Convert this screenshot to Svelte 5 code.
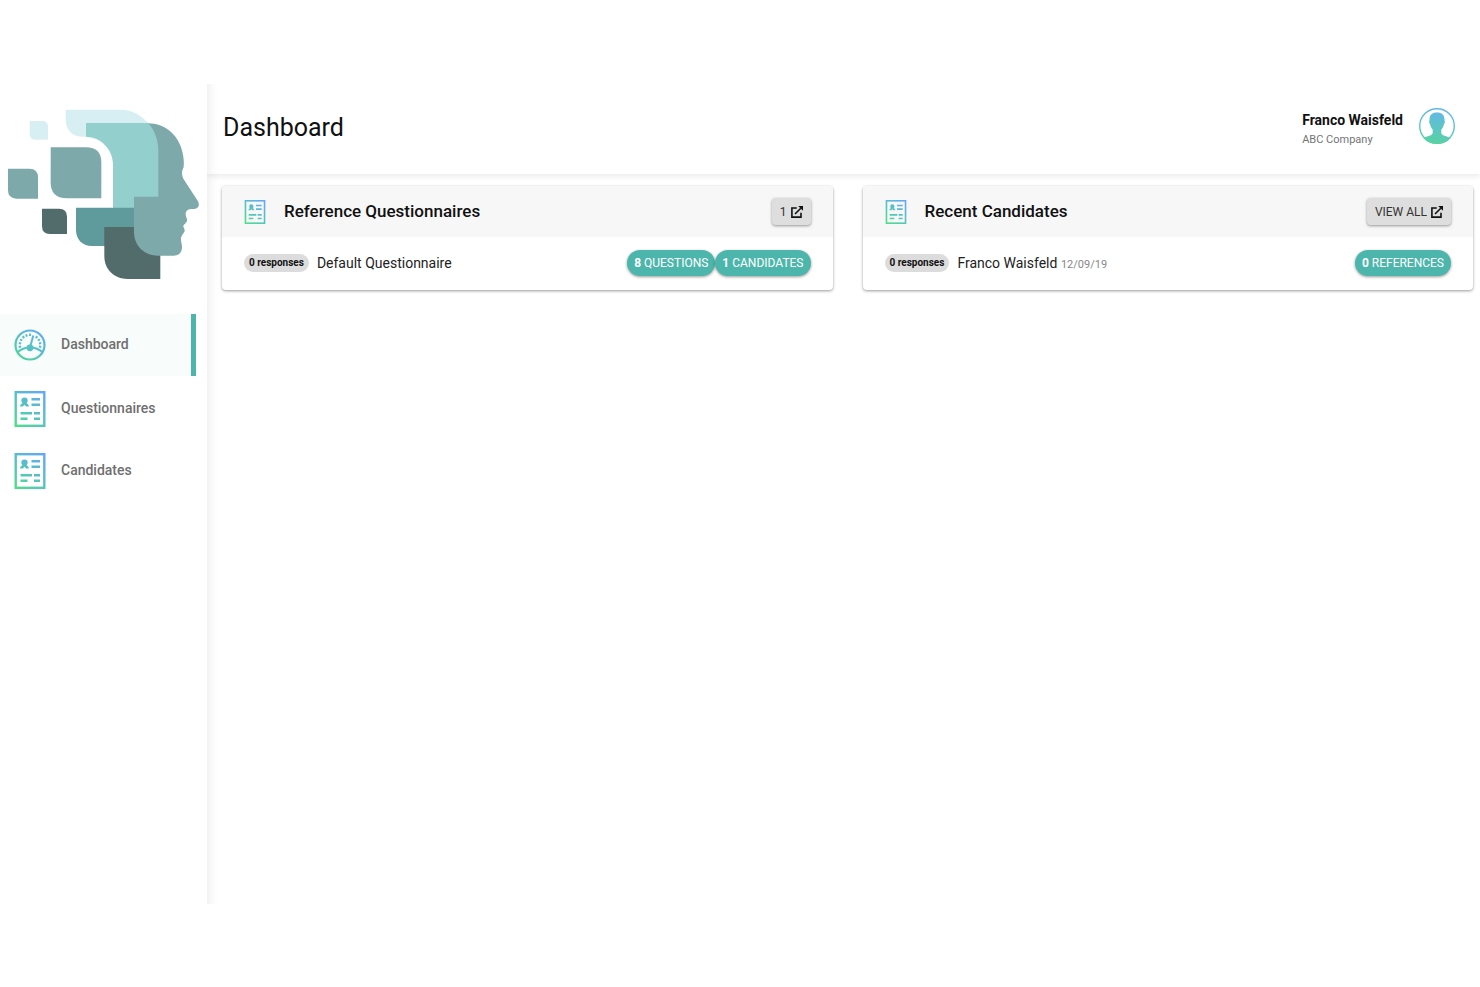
<script>
  const nav = [
    { label: 'Dashboard', icon: 'gauge', active: true },
    { label: 'Questionnaires', icon: 'form', active: false },
    { label: 'Candidates', icon: 'form', active: false }
  ];

  const cards = [
    {
      title: 'Reference Questionnaires',
      action: '1',
      name: 'Default Questionnaire',
      date: '',
      pills: [
        { count: 8, label: 'QUESTIONS' },
        { count: 1, label: 'CANDIDATES' }
      ]
    },
    {
      title: 'Recent Candidates',
      action: 'VIEW ALL',
      name: 'Franco Waisfeld',
      date: '12/09/19',
      pills: [{ count: 0, label: 'REFERENCES' }]
    }
  ];

  // Tick marks round the gauge dial, in degrees from the upward direction
  const ticks = [-100, -80, -60, -40, -20, 0, 40, 60, 80, 100];
</script>

{#snippet formIcon()}
  <svg class="form-icon" viewBox="0 0 31 36" aria-hidden="true">
    <rect x="1.2" y="1.2" width="28.6" height="33.6" fill="none" stroke="url(#brand)" stroke-width="2.4" />
    <g fill="url(#brand)">
      <path d="M10 6.500a3.200 3.200 0 0 1 3.200 3.200c0 1-.5 1.800-1.100 2.400.3 1 2.300 1 2.300 3.400h-2.800L10 13.800 8.400 15.500H5.600c0-2.400 2-2.400 2.300-3.400-.6-.6-1.100-1.400-1.100-2.400A3.200 3.200 0 0 1 10 6.500z" />
      <path d="M17 7h8.500v2.500H17zM17 12.500h8.500V15H17zM6 21h11.500v2.500H6zM19.500 21h6v2.500h-6zM6 26.500h7V29H6zM19.500 26.500h6V29h-6z" />
    </g>
  </svg>
{/snippet}

<svg class="defs" width="0" height="0" aria-hidden="true">
  <defs>
    <linearGradient id="brand" gradientUnits="userSpaceOnUse" x1="2" y1="34" x2="29" y2="2">
      <stop offset="0" stop-color="#4fdc8c" />
      <stop offset="0.5" stop-color="#56c1c4" />
      <stop offset="1" stop-color="#62a8fa" />
    </linearGradient>
    <linearGradient id="avatar" gradientUnits="userSpaceOnUse" x1="14" y1="36" x2="22" y2="0">
      <stop offset="0" stop-color="#58d3a0" />
      <stop offset="1" stop-color="#62b5ee" />
    </linearGradient>
  </defs>
</svg>

<div class="app">
  <aside>
    <svg class="logo" viewBox="24 87 573 510" role="img" aria-label="Company logo">
      <path fill="#d7eff3" d="M89 123h38q17 0 17 17v39h-38q-17 0-17-17z" />
      <path fill="#7da9ab" d="M24 266h64q26 0 26 26v64H50q-26 0-26-26z" />
      <path fill="#526b6b" d="M126 386h51q24 0 24 24v52h-51q-24 0-24-24z" />
      <path fill="#7da9ab" d="M152 202h106q46 0 46 46v107H200q-48 0-48-48z" />
      <path fill="#d7eff3" d="M197 89h163c37 0 63 16 87 42l-100 60-89-21h-14c-28 0-47-22-47-50z" />
      <path fill="#7da9ab" d="M443 130c55 0 97 39 106 94 4 25 2 29 2 38-7 13-6 23-1 34l43 66c7 12 4 24-11 25-13-1-25 2-25 15 0 9 5 12 4 20-1 7-9 10-11 15-1 5 4 8 4 15 0 6-10 12-11 23-1 11 4 18 3 29-1 13-9 23-26 23l-63-60V240z" />
      <path fill="#93cfcd" d="M258 129h186c20 22 31 50 31 83v172H339V254c0-45-36-84-81-84z" />
      <path fill="#5f9b9c" d="M228 383h176v115H275c-29 0-47-21-47-48z" />
      <path fill="#526b6b" d="M313 441h90l78 80v76H382c-39 0-69-28-69-68z" />
      <path fill="#7da9ab" d="M402 350h73l65 20-20 157h-46c-40 0-72-28-72-70z" />
    </svg>

    <nav>
      {#each nav as item}
        <a href="#{item.label.toLowerCase()}" class:active={item.active}>
          {#if item.icon === 'gauge'}
            <svg class="gauge" viewBox="0 0 32 32" aria-hidden="true">
              <g fill="none" stroke="url(#brand)">
                <circle cx="16" cy="16" r="14.500" stroke-width="2.200" />
                <path d="M3 23.500C7 20 11.500 18.500 16 18.500s9 1.500 13 5" stroke-width="2.200" />
                <path d="M16 18.500L19.300 6.500" stroke-width="2" />
              </g>
              {#each ticks as angle}
                <rect x="15" y="4.600" width="2" height="2.400" fill="#5bbcc9" transform="rotate({angle} 16 16)" />
              {/each}
              <circle cx="16" cy="18.800" r="3.400" fill="#56c1c4" />
            </svg>
          {:else}
            {@render formIcon()}
          {/if}
          <span>{item.label}</span>
        </a>
      {/each}
    </nav>
  </aside>

  <div class="content">
    <header>
      <h1>Dashboard</h1>
      <div class="user">
        <div>
          <strong>Franco Waisfeld</strong>
          <small>ABC Company</small>
        </div>
        <svg class="avatar" viewBox="0 0 36 36" aria-hidden="true">
          <circle cx="18" cy="18" r="17.300" fill="#fff" stroke="url(#avatar)" stroke-width="1.400" />
          <path fill="url(#avatar)" d="M18 4.500c5 0 7.800 2.600 7.500 8 .7.600.5 2.800-.6 3.800-.4 2.200-1.300 4-2.600 5.400v3c0 3 5.500 3.200 9.500 5.400A18 18 0 0 1 18 36 18 18 0 0 1 4.200 30.100c4-2.200 9.500-2.400 9.500-5.400v-3c-1.300-1.400-2.200-3.200-2.600-5.400-1.100-1-1.300-3.200-.6-3.800-.3-5.400 2.500-8 7.500-8z" />
        </svg>
      </div>
    </header>

    <main>
      {#each cards as card}
        <section>
          <div class="card-head">
            {@render formIcon()}
            <h2>{card.title}</h2>
            <button class="open">
              {card.action}
              <svg viewBox="0 0 12 12" aria-hidden="true">
                <path fill="none" stroke="#111" stroke-width="1.600" d="M5.800 2H.9v9.100H10V6.800M4 8l5.800-5.800" />
                <path fill="#111" d="M7.200 0H12v4.800z" />
              </svg>
            </button>
          </div>
          <div class="card-row">
            <span class="badge">0 responses</span>
            <span class="name">{card.name}{#if card.date}{' '}<small>{card.date}</small>{/if}</span>
            <div class="pills">
              {#each card.pills as pill}
                <button class="pill"><b>{pill.count}</b> {pill.label}</button>
              {/each}
            </div>
          </div>
        </section>
      {/each}
    </main>
  </div>
</div>

<style>
  :global(body) {
    background: #fff;
  }
  .defs {
    position: absolute;
  }
  .app {
    box-sizing: border-box;
    display: flex;
    min-height: 100vh;
    padding: 84px 0 83px;
    font-family: Roboto, sans-serif;
    color: #111;
  }
  aside {
    flex: 0 0 207px;
  }
  .logo {
    display: block;
    width: 191px;
    height: 170px;
    margin: 25px 8px 35px;
  }
  nav {
    display: flex;
    flex-direction: column;
    margin-right: 11px;
  }
  nav a {
    display: flex;
    align-items: center;
    gap: 15px;
    height: 62px;
    padding-left: 14px;
    font-size: 14px;
    font-weight: 500;
    color: #6f6f6f;
    text-decoration: none;
  }
  nav a.active {
    background: #f8fcfb;
    border-right: 5px solid #4db6ac;
    margin-bottom: 2px;
  }
  .gauge {
    width: 32px;
    height: 32px;
  }
  nav .form-icon {
    width: 32px;
    height: 36px;
  }
  nav span {
    padding-bottom: 3px;
  }
  .content {
    flex: 1;
    min-width: 0;
    background: linear-gradient(to right, #f2f2f2, #fafafa 5px, #fff 11px);
  }
  header {
    display: flex;
    align-items: center;
    justify-content: space-between;
    height: 90px;
    padding: 0 25px 0 16px;
    box-sizing: border-box;
    box-shadow: 0 3px 5px rgba(0, 0, 0, 0.07);
    clip-path: inset(0 0 -12px 0);
  }
  h1 {
    margin: 0;
    padding-bottom: 2px;
    font-size: 25px;
    line-height: 32px;
    font-weight: 400;
  }
  .user {
    display: flex;
    align-items: center;
    gap: 16px;
    padding-bottom: 6px;
  }
  .user > div {
    padding-top: 8px;
  }
  .user strong,
  .user small {
    display: block;
    line-height: 20px;
  }
  .user strong {
    font-size: 14px;
    font-weight: 700;
  }
  .user small {
    font-size: 11px;
    color: #757575;
  }
  .avatar {
    width: 36px;
    height: 36px;
  }
  main {
    display: grid;
    grid-template-columns: 1fr 1fr;
    gap: 30px;
    padding: 12px 7px 0 15px;
  }
  section {
    background: #fff;
    border-radius: 4px;
    overflow: hidden;
    box-shadow: 0 1px 3px rgba(0, 0, 0, 0.4);
  }
  .card-head {
    display: flex;
    align-items: center;
    height: 51px;
    padding: 0 22px;
    background: #f7f7f7;
  }
  .card-head .form-icon {
    width: 22px;
    height: 24px;
  }
  h2 {
    flex: 1;
    margin: 0 0 0 18px;
    padding-bottom: 2px;
    font-size: 17px;
    line-height: 24px;
    font-weight: 500;
  }
  button {
    border: 0;
    font-family: inherit;
    font-size: 12px;
    line-height: 16px;
    cursor: pointer;
    box-shadow: 0 1px 3px rgba(0, 0, 0, 0.4);
  }
  .open {
    display: flex;
    align-items: center;
    gap: 4px;
    height: 27px;
    padding: 0 8px;
    border-radius: 4px;
    background: #dedede;
    color: #333;
  }
  .open svg {
    width: 12px;
    height: 12px;
  }
  .card-row {
    display: flex;
    align-items: center;
    gap: 8px;
    height: 51px;
    padding: 0 22px 2px;
  }
  .badge {
    padding: 0 5px;
    border-radius: 9px;
    background: #dcdcdc;
    font-size: 10px;
    line-height: 18px;
    font-weight: 700;
  }
  .name {
    flex: 1;
    font-size: 14px;
    color: #222;
  }
  .name small {
    font-size: 11px;
    color: #888;
  }
  .pills {
    display: flex;
  }
  .pill {
    height: 26px;
    padding: 0 7px;
    border-radius: 13px;
    background: #4db6ac;
    color: #fff;
  }
</style>
